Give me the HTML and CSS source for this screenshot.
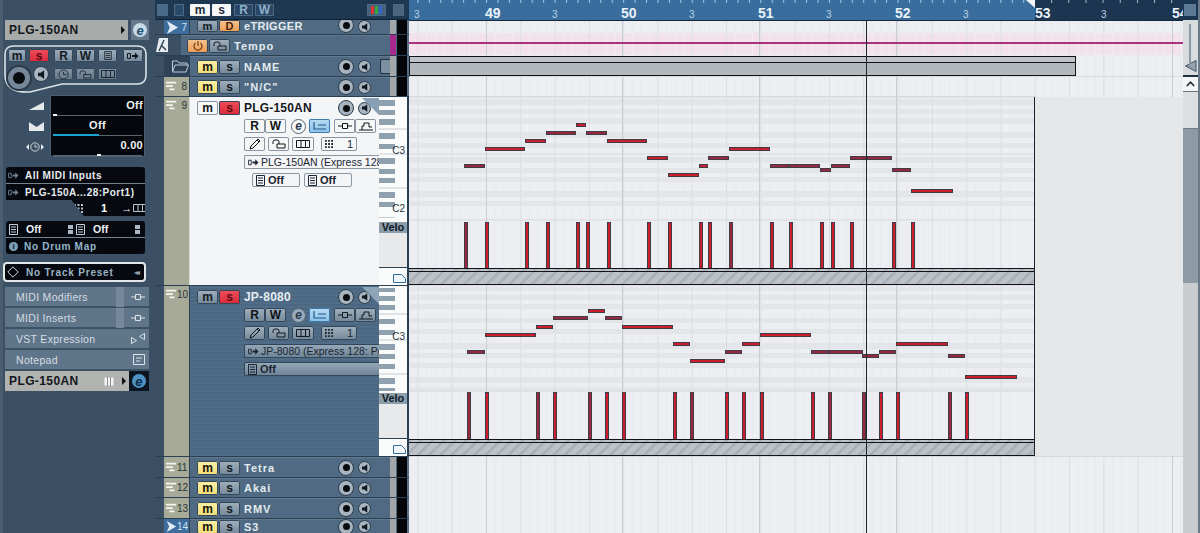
FILE: index.html
```html
<!DOCTYPE html>
<html lang="en">
<head>
<meta charset="utf-8">
<title>Project</title>
<link rel="stylesheet" href="styles.css">
</head>
<body>
<svg class="defs" width="0" height="0">
  <symbol id="i-lock" viewBox="0 0 14 10"><path d="M1 5V3q0-2 2-2h2q2 0 2 2v2M5 5h8v4H5z" fill="none" stroke="currentColor"/></symbol>
  <symbol id="i-cells" viewBox="0 0 14 8"><path d="M.5.5h13v7H.5zM5 .5v7M9.500 .5v7" fill="none" stroke="currentColor"/></symbol>
  <symbol id="i-clock" viewBox="0 0 12 12"><circle cx="6" cy="6" r="5" fill="none" stroke="currentColor"/><path d="M6 3v3h3" fill="none" stroke="currentColor"/></symbol>
  <symbol id="i-dots" viewBox="0 0 9 9"><path d="M0 0h2v2H0zM3.500 0h2v2h-2zM7 0h2v2H7zM0 3.500h2v2H0zM3.500 3.500h2v2h-2zM7 3.500h2v2H7zM0 7h2v2H0zM3.500 7h2v2h-2zM7 7h2v2H7z" fill="currentColor"/></symbol>
  <symbol id="i-out" viewBox="0 0 12 10"><path d="M.5 2.500h3v5h-3z" fill="none" stroke="currentColor"/><path d="M5 4h3V1.500L11.500 5 8 8.500V6H5z" fill="currentColor"/></symbol>
  <symbol id="i-list" viewBox="0 0 9 11"><path d="M.5.5h8v10h-8zM2 3h5M2 5.500h5M2 8h5" fill="none" stroke="currentColor"/></symbol>
  <symbol id="i-track" viewBox="0 0 13 11"><path d="M0 0h12v2H0zM0 4h8v2H0zM4 8h6v2H4z" fill="#f4f5ee"/></symbol>
  <symbol id="i-play" viewBox="0 0 14 14"><path d="M1 0l12 7-12 7 3-7z" fill="#dfeaf4"/></symbol>
  <symbol id="i-pencil" viewBox="0 0 12 12"><path d="M1 11l1-3 6-6 2 2-6 6zM8 2l1-1 2 2-1 1" fill="none" stroke="currentColor"/></symbol>
  <symbol id="i-mix" viewBox="0 0 14 8"><path d="M0 4h4M10 4h4M4.500 1.500h5v5h-5z" fill="none" stroke="currentColor"/></symbol>
  <symbol id="i-send" viewBox="0 0 14 10"><path d="M0 9h14M3 9V5h2V2h5v4h3" fill="none" stroke="currentColor"/></symbol>
  <symbol id="i-speaker" viewBox="0 0 8 10"><path d="M0 3h3l4-3v10L3 7H0z" fill="currentColor"/></symbol>
</svg>

<div class="app">
  <aside class="inspector">
    <div class="insp-head">
      <div class="pill"><span>PLG-150AN</span><i class="caret"></i></div>
      <div class="ebtn">e</div>
    </div>

    <div class="ctrl">
      <svg class="ctrl-line" width="144" height="49" viewBox="0 0 144 49"><path d="M10 1H133Q142 1 142 9V30Q142 39 133 39H58L26 47Q1 48 1 30V9Q1 1 10 1Z" fill="none" stroke="#dbe3e8" stroke-width="1.600"/></svg>
      <div class="ctrl-row">
        <b class="btn w18">m</b><b class="btn w20 red">s</b>
        <b class="btn w19 ml5">R</b><b class="btn w19">W</b>
        <b class="btn w19"><svg width="10" height="9"><use href="#i-list"/></svg></b>
        <b class="btn w20 ml6"><svg width="12" height="10"><use href="#i-out"/></svg></b>
      </div>
      <div class="ctrl-row2">
        <div class="rec big"></div>
        <div class="mon mid"><svg width="7" height="9"><use href="#i-speaker"/></svg></div>
        <b class="btn w19 flat"><svg width="11" height="11"><use href="#i-clock"/></svg></b>
        <b class="btn w19 flat"><svg width="13" height="9"><use href="#i-lock"/></svg></b>
        <b class="btn w19 flat"><svg width="14" height="8"><use href="#i-cells"/></svg></b>
      </div>
    </div>

    <div class="meters">
      <div class="meter-icons">
        <svg width="15" height="9"><path d="M0 9L15 1v8z" fill="#e4e9ec"/></svg>
        <svg width="15" height="9"><path d="M0 0l7.500 5L15 0v9H0z" fill="#e4e9ec"/></svg>
        <span class="pan-ico"><i class="tl"></i><svg width="10" height="10"><use href="#i-clock"/></svg><i class="tr"></i></span>
      </div>
      <div class="meter-box">
        <div class="meter right">Off<i class="track"><i class="thumb t-left"></i></i></div>
        <div class="meter center">Off<i class="track"><i class="fill"></i></i></div>
        <div class="meter right">0.00<i class="track"><i class="thumb t-mid"></i></i></div>
      </div>
    </div>

    <div class="io">
      <div class="io-row line"><svg width="11" height="9"><use href="#i-out"/></svg><span>All MIDI Inputs</span></div>
      <div class="io-row"><svg width="11" height="9"><use href="#i-out"/></svg><span>PLG-150A...28:Port1)</span></div>
    </div>
    <div class="io-tail">
      <svg width="9" height="9"><use href="#i-dots"/></svg><span>1</span><em>&#8594;</em><svg width="14" height="8"><use href="#i-cells"/></svg>
    </div>

    <div class="drum">
      <div class="drum-row">
        <svg width="9" height="11"><use href="#i-list"/></svg><span class="off">Off</span><i class="updn"></i>
        <svg width="9" height="11"><use href="#i-list"/></svg><span class="off">Off</span><i class="updn"></i>
      </div>
      <div class="drum-map"><i class="info">i</i><span>No Drum Map</span></div>
    </div>

    <div class="preset">
      <svg width="12" height="12" viewBox="0 0 12 12"><path d="M6 .8L11.200 6 6 11.200.8 6z" fill="none" stroke="#cfd8df"/></svg>
      <span>No Track Preset</span><em>&#9666;&#9666;</em>
    </div>

    <div class="sect"><span>MIDI Modifiers</span><i class="strip"></i><svg width="14" height="8"><use href="#i-mix"/></svg></div>
    <div class="sect"><span>MIDI Inserts</span><i class="strip"></i><svg width="14" height="8"><use href="#i-mix"/></svg></div>
    <div class="sect"><span>VST Expression</span><svg class="vst" width="14" height="11" viewBox="0 0 14 11"><path d="M.5 4.500l5 3-5 3zM13.500.5v6l-5-3z" fill="none" stroke="#dbe3e8"/></svg></div>
    <div class="sect"><span>Notepad</span><svg class="vst" width="12" height="11" viewBox="0 0 12 11"><path d="M.5.5h11v10H.5zM3 4h6M3 7h4" fill="none" stroke="#dbe3e8"/></svg></div>
    <div class="sect last">
      <div class="pill2"><span>PLG-150AN</span><svg width="10" height="9"><path d="M.5.5h9v8h-9z" fill="#f5f5f5"/><path d="M3.500 0v9M6.500 0v9" stroke="#888"/></svg><i class="caret"></i></div>
      <div class="ebtn dark">e</div>
    </div>
  </aside>

  <section class="tracks">
    <div class="toolbar">
      <b class="tb drop"></b>
      <b class="tb sq"></b>
      <b class="tb tog on w20">m</b><b class="tb tog on w18">s</b><b class="tb tog w19">R</b><b class="tb tog w19">W</b>
      <span class="tb-space"></span>
      <b class="tb rgb"><i></i><i></i><i></i></b>
      <b class="tb gray"></b>
    </div>

    <div class="row r14 end">
      <div class="gut"></div><div class="num blue"><svg width="13" height="13"><use href="#i-play"/></svg><span>7</span></div>
      <div class="body"><b class="btn w21">m</b><b class="btn w21 orange">D</b><span class="name">eTRIGGER</span><div class="rec"></div><div class="mon"><svg width="6" height="8"><use href="#i-speaker"/></svg></div><i class="strip-g"></i><i class="strip-k"></i></div>
    </div>
    <div class="row r21">
      <div class="gut wide"><svg width="12" height="14" viewBox="0 0 12 14"><path d="M3 0h9v14H0z" fill="#e6ecf0"/><path d="M3 13L8 2M5 7l5 5" stroke="#33475b" stroke-width="1.500"/></svg></div>
      <div class="body tempo"><b class="btn w21 orange"><svg width="10" height="10" viewBox="0 0 10 10"><path d="M5 0v5M2.500 2a4 4 0 1 0 5 0" fill="none" stroke="#6b3a10" stroke-width="1.200"/></svg></b><b class="btn w21"><svg width="14" height="10"><use href="#i-lock"/></svg></b><span class="name">Tempo</span><i class="strip-m"></i><i class="strip-k"></i></div>
    </div>
    <div class="row r21">
      <div class="gut"></div><div class="num navy"><svg class="folder" width="17" height="13" viewBox="0 0 17 13"><path d="M.5 11V1h5l1.500 2h8v2M.5 12L3 5h13.500l-2.500 7z" fill="none" stroke="#bccad6"/></svg></div>
      <div class="body"><b class="btn w21 yel">m</b><b class="btn w21">s</b><span class="name">NAME</span><div class="rec"></div><div class="mon"><svg width="6" height="8"><use href="#i-speaker"/></svg></div><i class="stub"></i><i class="strip-g tight"></i><i class="strip-k"></i></div>
    </div>
    <div class="row r20">
      <div class="gut"></div><div class="num"><svg width="11" height="11"><use href="#i-track"/></svg><span>8</span></div>
      <div class="body"><b class="btn w21 yel">m</b><b class="btn w21">s</b><span class="name">"N/C"</span><div class="rec"></div><div class="mon"><svg width="6" height="8"><use href="#i-speaker"/></svg></div><i class="strip-g"></i><i class="strip-k"></i></div>
    </div>

    <div class="row expanded r189 light">
      <div class="gut"></div><div class="num top"><svg width="11" height="11"><use href="#i-track"/></svg><span>9</span></div>
      <div class="detail">
        <i class="corner"></i>
        <div class="d-head"><b class="btn w21 white">m</b><b class="btn w21 red">s</b><span class="name big">PLG-150AN</span><div class="rec"></div><div class="mon"><svg width="6" height="8"><use href="#i-speaker"/></svg></div></div>
        <div class="d-row">
          <b class="btn w21 white">R</b><b class="btn w21 white">W</b><b class="ebox">e</b><b class="btn w21 blue-on"><svg width="14" height="8" viewBox="0 0 14 8"><path d="M1 0v7h12M5 3h8" fill="none" stroke="#1d5a90" stroke-width="1.200"/></svg></b><b class="btn w21 white ml4"><svg width="14" height="8"><use href="#i-mix"/></svg></b><b class="btn w21 white"><svg width="14" height="10"><use href="#i-send"/></svg></b>
        </div>
        <div class="d-row">
          <b class="btn w21 white"><svg width="12" height="12"><use href="#i-pencil"/></svg></b><b class="btn w21 white ml3"><svg width="14" height="10"><use href="#i-lock"/></svg></b><b class="btn w22 white ml3"><svg width="14" height="8"><use href="#i-cells"/></svg></b><b class="btn w36 white ml7 chan"><svg width="8" height="8"><use href="#i-dots"/></svg><span>1</span></b>
        </div>
        <div class="d-row"><b class="field"><svg width="11" height="9"><use href="#i-out"/></svg><span>PLG-150AN (Express 128:</span></b></div>
        <div class="d-row"><b class="field off w48"><svg width="9" height="11"><use href="#i-list"/></svg><span>Off</span></b><b class="field off w48 ml4"><svg width="9" height="11"><use href="#i-list"/></svg><span>Off</span></b></div>
      </div>
      <svg class="piano" width="30" height="189" viewBox="379 96 30 189">
        <rect class="p-white" x="379" y="96" width="28" height="125"/>
        <path class="p-key" d="M379 99h16v6h-16zM379 109h16v5h-16zM379 118h16v6h-16zM379 132h16v6h-16zM379 143h16v5h-16zM379 157h16v6h-16zM379 168h16v5h-16zM379 177h16v5h-16zM379 191h16v6h-16zM379 201h16v5h-16z"/>
        <path class="p-line" d="M379 128h28M379 153h28M379 187h28M379 216.500h16"/>
        <text class="p-c" x="405" y="153" text-anchor="end">C3</text>
        <text class="p-c" x="405" y="211" text-anchor="end">C2</text>
        <rect class="p-velo" x="379" y="221" width="28" height="11"/>
        <text class="p-vt" x="393" y="230" text-anchor="middle">Velo</text>
        <rect class="p-pad" x="379" y="232" width="28" height="34"/>
        <rect class="p-white" x="379" y="267" width="28" height="18"/>
        <path class="p-doc" d="M393.500 273.500h8l4 4v4h-12z"/>
      </svg>
    </div>

    <div class="row expanded r171">
      <div class="gut"></div><div class="num top"><svg width="11" height="11"><use href="#i-track"/></svg><span>10</span></div>
      <div class="detail">
        <i class="corner pale"></i>
        <div class="d-head"><b class="btn w21">m</b><b class="btn w21 red">s</b><span class="name big pale-t">JP-8080</span><div class="rec"></div><div class="mon"><svg width="6" height="8"><use href="#i-speaker"/></svg></div></div>
        <div class="d-row plus1">
          <b class="btn w21 dark-t">R</b><b class="btn w21 dark-t">W</b><b class="ebox blue">e</b><b class="btn w21 blue-on"><svg width="14" height="8" viewBox="0 0 14 8"><path d="M1 0v7h12M5 3h8" fill="none" stroke="#1d5a90" stroke-width="1.200"/></svg></b><b class="btn w21 ml4"><svg width="14" height="8"><use href="#i-mix"/></svg></b><b class="btn w21"><svg width="14" height="10"><use href="#i-send"/></svg></b>
        </div>
        <div class="d-row">
          <b class="btn w21"><svg width="12" height="12"><use href="#i-pencil"/></svg></b><b class="btn w21 ml3"><svg width="14" height="10"><use href="#i-lock"/></svg></b><b class="btn w22 ml3"><svg width="14" height="8"><use href="#i-cells"/></svg></b><b class="btn w36 ml7 chan"><svg width="8" height="8"><use href="#i-dots"/></svg><span>1</span></b>
        </div>
        <div class="d-row"><b class="field navyf"><svg width="11" height="9"><use href="#i-out"/></svg><span>JP-8080 (Express 128: Po</span></b></div>
        <div class="d-row"><b class="field navyf grow"><svg width="9" height="11"><use href="#i-list"/></svg><span>Off</span></b></div>
      </div>
      <svg class="piano" width="30" height="171" viewBox="379 285 30 171">
        <rect class="p-white" x="379" y="285" width="28" height="107"/>
        <path class="p-key" d="M379 287h16v4h-16zM379 295h16v5h-16zM379 304h16v5h-16zM379 318h16v5h-16zM379 329h16v5h-16zM379 343h16v6h-16zM379 353h16v5h-16zM379 363h16v5h-16zM379 377h16v6h-16zM379 387h16v3h-16z"/>
        <path class="p-line" d="M379 313h28M379 339h28M379 373h28"/>
        <text class="p-c" x="405" y="339" text-anchor="end">C3</text>
        <rect class="p-velo" x="379" y="392" width="28" height="11"/>
        <text class="p-vt" x="393" y="401" text-anchor="middle">Velo</text>
        <rect class="p-pad" x="379" y="403" width="28" height="34"/>
        <rect class="p-white" x="379" y="438" width="28" height="18"/>
        <path class="p-doc" d="M393.500 444.500h8l4 4v4h-12z"/>
      </svg>
    </div>

    <div class="row r21">
      <div class="gut"></div><div class="num"><svg width="11" height="11"><use href="#i-track"/></svg><span>11</span></div>
      <div class="body"><b class="btn w21 yel">m</b><b class="btn w21">s</b><span class="name">Tetra</span><div class="rec"></div><div class="mon"><svg width="6" height="8"><use href="#i-speaker"/></svg></div><i class="strip-g"></i><i class="strip-k"></i></div>
    </div>
    <div class="row r20">
      <div class="gut"></div><div class="num"><svg width="11" height="11"><use href="#i-track"/></svg><span>12</span></div>
      <div class="body"><b class="btn w21 yel">m</b><b class="btn w21">s</b><span class="name">Akai</span><div class="rec"></div><div class="mon"><svg width="6" height="8"><use href="#i-speaker"/></svg></div><i class="strip-g"></i><i class="strip-k"></i></div>
    </div>
    <div class="row r21">
      <div class="gut"></div><div class="num"><svg width="11" height="11"><use href="#i-track"/></svg><span>13</span></div>
      <div class="body"><b class="btn w21 yel">m</b><b class="btn w21">s</b><span class="name">RMV</span><div class="rec"></div><div class="mon"><svg width="6" height="8"><use href="#i-speaker"/></svg></div><i class="strip-g"></i><i class="strip-k"></i></div>
    </div>
    <div class="row r15">
      <div class="gut"></div><div class="num blue"><svg width="11" height="13"><use href="#i-play"/></svg><span>14</span></div>
      <div class="body"><b class="btn w21 yel">m</b><b class="btn w21">s</b><span class="name">S3</span><div class="rec"></div><div class="mon"><svg width="6" height="8"><use href="#i-speaker"/></svg></div><i class="strip-g"></i><i class="strip-k"></i></div>
    </div>
  </section>

  <svg class="arrange" width="774" height="533" viewBox="409 0 774 533">
    <defs>
      <pattern id="beat" patternUnits="userSpaceOnUse" x="486" y="0" width="34.300" height="10"><rect x="0" width="1" height="10" fill="#dadde1"/></pattern>
      <pattern id="sub" patternUnits="userSpaceOnUse" x="486" y="0" width="8.575" height="10"><rect x="0" width="1" height="10" fill="#e7e9ed"/></pattern>
      <pattern id="tick" patternUnits="userSpaceOnUse" x="486" y="0" width="11.430" height="4"><rect x="0" width="1" height="3" fill="#a9c6de"/></pattern>
      <pattern id="tick2" patternUnits="userSpaceOnUse" x="1034" y="0" width="17.150" height="4"><rect x="0" width="1" height="3" fill="#a9bccd"/></pattern>
      <pattern id="pinkbar" patternUnits="userSpaceOnUse" x="410" y="0" width="8.575" height="10"><rect x="0" width="7.500" height="10" fill="#f1e2ec"/><rect x="7.500" width="1.075" height="10" fill="#f5ebf1"/></pattern>
      <pattern id="hatch" patternUnits="userSpaceOnUse" width="8" height="8" patternTransform="rotate(45)"><rect width="8" height="8" fill="#bcc2c8"/><rect width="2.500" height="8" fill="#a7aeb5"/></pattern>
    </defs>

    <rect x="409" y="0" width="774" height="533" fill="#eceef1"/>
    <rect x="409" y="21" width="774" height="512" fill="url(#sub)"/>

    <!-- lane backgrounds -->
    <rect x="1035" y="97" width="148" height="436" fill="#e5e7e9"/>
    <rect x="1035" y="456" width="148" height="77" fill="#eceef1"/>
    <rect x="1035" y="456" width="148" height="77" fill="url(#sub)"/>
    <path class="stripes" d="M409 99h626v6H409zM409 109h626v5H409zM409 118h626v6H409zM409 132h626v6H409zM409 143h626v5H409zM409 157h626v6H409zM409 168h626v5H409zM409 177h626v5H409zM409 191h626v6H409zM409 201h626v5H409zM409 287h626v4H409zM409 295h626v5H409zM409 304h626v5H409zM409 318h626v5H409zM409 329h626v5H409zM409 343h626v6H409zM409 353h626v5H409zM409 363h626v5H409zM409 377h626v6H409zM409 387h626v4H409z"/>
    <path class="hsep" d="M409 97h626M409 154h626M409 220h626M409 391h626M409 76.500h774M409 96.500h626M409 285.500h774M409 456.500h774"/>

    <!-- tempo track -->
    <rect x="409" y="33" width="774" height="22" fill="#f0e2eb"/>
    <rect x="409" y="33" width="774" height="22" fill="url(#pinkbar)"/>

    <!-- grid -->
    <rect x="409" y="21" width="774" height="512" fill="url(#beat)" fill-opacity=".9"/>
    <rect x="1035" y="97" width="148" height="359" fill="#e5e7e9"/>
    <path class="barline" d="M486.500 21v512M622.500 21v512M759.500 21v512M896.500 21v512M1172.500 21v76M1172.500 456v77"/>

    <rect x="409" y="42" width="774" height="2" fill="#a8307f"/>

    <!-- folder part -->
    <rect x="409.500" y="56.500" width="666" height="19" fill="#b3b8bd" stroke="#101418"/>
    <rect x="410" y="57" width="665" height="5" fill="#bfc3c7"/>
    <path d="M409 62.500h666" stroke="#101418"/>

    <!-- note lane 1 -->
    <g class="notes">
      <rect class="n d" x="464.500" y="164.500" width="20" height="3"/>
      <rect class="n" x="485.500" y="147.500" width="39" height="3"/>
      <rect class="n" x="525.500" y="139.500" width="20" height="3"/>
      <rect class="n d" x="546.500" y="131.500" width="29" height="3"/>
      <rect class="n" x="576.500" y="123.500" width="9" height="3"/>
      <rect class="n d" x="586.500" y="131.500" width="20" height="3"/>
      <rect class="n" x="607.500" y="139.500" width="39" height="3"/>
      <rect class="n" x="647.500" y="156.500" width="20" height="3"/>
      <rect class="n" x="668.500" y="173.500" width="30" height="3"/>
      <rect class="n" x="699.500" y="164.500" width="8" height="3"/>
      <rect class="n d" x="708.500" y="156.500" width="20" height="3"/>
      <rect class="n" x="729.500" y="147.500" width="40" height="3"/>
      <rect class="n d" x="770.500" y="164.500" width="18" height="3"/>
      <rect class="n d" x="789.500" y="164.500" width="30" height="3"/>
      <rect class="n d" x="820.500" y="168.500" width="10" height="3"/>
      <rect class="n d" x="831.500" y="164.500" width="18" height="3"/>
      <rect class="n d" x="850.500" y="156.500" width="16" height="3"/>
      <rect class="n d" x="867.500" y="156.500" width="24" height="3"/>
      <rect class="n d" x="892.500" y="168.500" width="18" height="3"/>
      <rect class="n" x="911.500" y="189.500" width="41" height="3"/>
    </g>
    <g class="vels">
      <rect class="v d" x="464.500" y="222.500" width="3" height="46"/>
      <rect class="v" x="485.500" y="222.500" width="3" height="46"/>
      <rect class="v" x="525.500" y="222.500" width="3" height="46"/>
      <rect class="v" x="546.500" y="222.500" width="3" height="46"/>
      <rect class="v" x="576.500" y="222.500" width="3" height="46"/>
      <rect class="v" x="586.500" y="222.500" width="3" height="46"/>
      <rect class="v" x="607.500" y="222.500" width="3" height="46"/>
      <rect class="v" x="647.500" y="222.500" width="3" height="46"/>
      <rect class="v" x="668.500" y="222.500" width="3" height="46"/>
      <rect class="v" x="699.500" y="222.500" width="3" height="46"/>
      <rect class="v" x="708.500" y="222.500" width="3" height="46"/>
      <rect class="v d" x="729.500" y="222.500" width="3" height="46"/>
      <rect class="v" x="770.500" y="222.500" width="3" height="46"/>
      <rect class="v" x="789.500" y="222.500" width="3" height="46"/>
      <rect class="v" x="820.500" y="222.500" width="3" height="46"/>
      <rect class="v" x="831.500" y="222.500" width="3" height="46"/>
      <rect class="v" x="850.500" y="222.500" width="3" height="46"/>
      <rect class="v" x="892.500" y="222.500" width="3" height="46"/>
      <rect class="v" x="911.500" y="222.500" width="3" height="46"/>
    </g>
    <rect x="409" y="268" width="626" height="17" fill="url(#hatch)"/>
    <path class="hline" d="M409 268.500h626M409 271.500h626M409 284.500h626"/>

    <!-- note lane 2 -->
    <g class="notes">
      <rect class="n d" x="467.500" y="350.500" width="17" height="3"/>
      <rect class="n" x="485.500" y="333.500" width="50" height="3"/>
      <rect class="n" x="536.500" y="325.500" width="16" height="3"/>
      <rect class="n d" x="553.500" y="316.500" width="34" height="3"/>
      <rect class="n" x="588.500" y="309.500" width="16" height="3"/>
      <rect class="n d" x="605.500" y="316.500" width="16" height="3"/>
      <rect class="n" x="622.500" y="325.500" width="50" height="3"/>
      <rect class="n" x="673.500" y="342.500" width="16" height="3"/>
      <rect class="n" x="690.500" y="359.500" width="34" height="3"/>
      <rect class="n d" x="725.500" y="350.500" width="16" height="3"/>
      <rect class="n" x="742.500" y="342.500" width="17" height="3"/>
      <rect class="n" x="760.500" y="333.500" width="50" height="3"/>
      <rect class="n d" x="811.500" y="350.500" width="16" height="3"/>
      <rect class="n d" x="828.500" y="350.500" width="34" height="3"/>
      <rect class="n d" x="862.500" y="354.500" width="16" height="3"/>
      <rect class="n d" x="879.500" y="350.500" width="16" height="3"/>
      <rect class="n" x="896.500" y="342.500" width="51" height="3"/>
      <rect class="n d" x="948.500" y="354.500" width="16" height="3"/>
      <rect class="n" x="965.500" y="375.500" width="51" height="3"/>
    </g>
    <g class="vels">
      <rect class="v d" x="467.500" y="392.500" width="3" height="47"/>
      <rect class="v" x="485.500" y="392.500" width="3" height="47"/>
      <rect class="v d" x="536.500" y="392.500" width="3" height="47"/>
      <rect class="v" x="553.500" y="392.500" width="3" height="47"/>
      <rect class="v d" x="588.500" y="392.500" width="3" height="47"/>
      <rect class="v" x="605.500" y="392.500" width="3" height="47"/>
      <rect class="v" x="622.500" y="392.500" width="3" height="47"/>
      <rect class="v" x="673.500" y="392.500" width="3" height="47"/>
      <rect class="v d" x="690.500" y="392.500" width="3" height="47"/>
      <rect class="v" x="725.500" y="392.500" width="3" height="47"/>
      <rect class="v" x="742.500" y="392.500" width="3" height="47"/>
      <rect class="v" x="760.500" y="392.500" width="3" height="47"/>
      <rect class="v" x="811.500" y="392.500" width="3" height="47"/>
      <rect class="v d" x="828.500" y="392.500" width="3" height="47"/>
      <rect class="v d" x="862.500" y="392.500" width="3" height="47"/>
      <rect class="v" x="879.500" y="392.500" width="3" height="47"/>
      <rect class="v" x="896.500" y="392.500" width="3" height="47"/>
      <rect class="v d" x="948.500" y="392.500" width="3" height="47"/>
      <rect class="v" x="965.500" y="392.500" width="3" height="47"/>
    </g>
    <rect x="409" y="439" width="626" height="17" fill="url(#hatch)"/>
    <path class="hline" d="M409 439.500h626M409 442.500h626M409 455.500h626"/>

    <path class="endline" d="M1034.500 97v359"/>
    <path class="playhead" d="M866.500 21v512"/>

    <!-- ruler -->
    <rect x="409" y="0" width="626" height="20" fill="#386d9d"/>
    <rect x="1035" y="0" width="148" height="20" fill="#1c3551"/>
    <rect x="409" y="0" width="626" height="4" fill="url(#tick)"/>
    <rect x="1035" y="0" width="148" height="4" fill="url(#tick2)"/>
    <path d="M1026 0h9v8z" fill="#f2f5f8"/>
    <rect x="409" y="20" width="774" height="1" fill="#16293c"/>
    <g class="bar-l">
      <text x="485" y="18">49</text><text x="621" y="18">50</text><text x="758" y="18">51</text><text x="895" y="18">52</text><text x="1035" y="18">53</text><text x="1172" y="18">54</text>
    </g>
    <g class="beat-l">
      <text x="414" y="18">3</text><text x="552" y="18">3</text><text x="689" y="18">3</text><text x="826" y="18">3</text><text x="963" y="18">3</text><text x="1101" y="18">3</text>
    </g>
  </svg>

  <aside class="scroll">
    <div class="sc-top"><b></b></div>
    <div class="sc-zoom"><i></i><svg width="12" height="12" viewBox="0 0 12 12"><path d="M11 .5v11L.5 6z" fill="#95a3ae" stroke="#3f5162"/></svg></div>
    <div class="sc-up"><svg width="9" height="6" viewBox="0 0 9 6"><path d="M.8 5L4.500 1.200 8.200 5" fill="none" stroke="#1b2a38" stroke-width="1.600"/></svg></div>
    <div class="sc-track"></div>
    <div class="sc-thumb"></div>
    <div class="sc-rest"></div>
  </aside>
</div>
</body>
</html>
```

FILE: styles.css
```css
* { box-sizing: border-box; }
html, body { margin: 0; padding: 0; background: #3b5064; }
body { font-family: "Liberation Sans", Arial, sans-serif; overflow: hidden; }
.defs { position: absolute; }
.app { display: flex; width: 1200px; height: 533px; overflow: hidden; }
i, em { font-style: normal; }
svg { flex: none; }

/* inspector */
.inspector { width: 155px; flex: none; height: 533px; background: #3b5064; border-left: 3px solid #4a5e70; }
.insp-head { display: flex; margin: 20px 0 0 2px; width: 144px; gap: 3px; }
.pill { width: 123px; height: 20px; background: #a7abaa; display: flex; align-items: center; justify-content: space-between; padding: 0 3px 0 4px; font-size: 12px; font-weight: 700; color: #14181c; letter-spacing: .4px; }
.caret { display: inline-block; width: 0; height: 0; border-left: 4px solid #111; border-top: 4px solid transparent; border-bottom: 4px solid transparent; }
.ebtn { width: 18px; height: 20px; display: flex; align-items: center; justify-content: center; background: #66798a; color: #24506f; font: italic 700 13px "Liberation Sans", sans-serif; position: relative; z-index: 0; }
.ebtn::before { content: ""; position: absolute; left: 2px; top: 3px; width: 14px; height: 14px; border-radius: 50%; background: #c6dbe9; z-index: -1; }
.ebtn.dark { background: #0b1622; height: 20px; width: 20px; color: #0b2c44; }
.ebtn.dark::before { left: 3px; background: #4f93c4; }

.ctrl { position: relative; margin: 5px 0 0 1px; width: 144px; height: 49px; padding: 4px 0 0 4px; }
.ctrl-line { position: absolute; left: 0; top: 0; }
.ctrl-row { display: flex; gap: 3px; position: relative; }
.ctrl-row .btn { height: 13px; }
.ctrl-row2 { display: flex; align-items: flex-start; position: relative; margin-top: 3px; gap: 3px; }
.rec.big { width: 26px; height: 26px; border-width: 2px; margin: 0 -1px 0 -2px; background: #76879a; }
.rec.big::after { width: 12px; height: 12px; left: 5px; top: 5px; }
.mon.mid { width: 16px; height: 16px; margin: 1px 2px 0 -1px; }
.ctrl-row2 .btn { height: 12px; margin-top: 3px; }
.flat { opacity: .72; }

.meters { display: flex; margin: 1px 0 0 0; }
.meter-icons { width: 47px; display: flex; flex-direction: column; align-items: flex-end; padding: 6px 6px 0 0; gap: 12px; color: #e4e9ec; }
.pan-ico { display: flex; align-items: center; gap: 1px; color: #e4e9ec; margin-top: -1px; }
.pan-ico .tl { border-right: 3px solid #e4e9ec; border-top: 3px solid transparent; border-bottom: 3px solid transparent; }
.pan-ico .tr { border-left: 3px solid #e4e9ec; border-top: 3px solid transparent; border-bottom: 3px solid transparent; }
.meter-box { width: 95px; height: 62px; background: #04070b; border: 1px solid #4c6072; border-radius: 2px; padding: 2px 1px 0; }
.meter { position: relative; height: 20px; color: #f0f3f5; font-size: 11px; font-weight: 700; line-height: 15px; letter-spacing: .3px; }
.meter.right { text-align: right; }
.meter.center { text-align: center; }
.meter .track { position: absolute; left: 1px; right: 1px; bottom: 2px; height: 1px; background: #5b6670; }
.thumb { position: absolute; top: -1px; height: 2px; width: 4px; background: #f0f3f5; }
.t-left { left: 0; }
.t-mid { left: 44px; }
.meter .fill { position: absolute; left: 0; top: -1px; width: 46px; height: 2px; background: #1aa4d4; }

.io { margin: 10px 0 0 3px; width: 139px; height: 33px; background: #060a10; border-radius: 3px 3px 0 0; }
.io-row { display: flex; align-items: center; height: 16px; padding-left: 2px; gap: 6px; color: #6a8193; font-size: 10px; font-weight: 700; }
.io-row span { color: #e6ebef; letter-spacing: .5px; white-space: nowrap; }
.io-row.line { border-bottom: 1px solid #75838f; height: 17px; }
.io-tail { margin-left: 3px; width: 139px; height: 16px; background: #060a10; clip-path: polygon(47% 0, 100% 0, 100% 100%, 56% 100%); display: flex; align-items: center; padding-left: 68px; color: #b9c6d0; font-size: 11px; font-weight: 700; }
.io-tail span { color: #fff; margin-left: 18px; }
.io-tail em { color: #fff; margin-left: 14px; margin-right: 1px; }
.drum { margin: 5px 0 0 3px; width: 139px; height: 33px; background: #060a10; border-radius: 3px; }
.drum-row { display: flex; align-items: center; height: 17px; padding-left: 3px; border-bottom: 1px solid #75838f; color: #c5d0d8; }
.off { font-size: 10.500px; font-weight: 700; color: #eef2f4; margin-left: 8px; width: 42px; }
.updn { width: 5px; height: 9px; margin: 0 3px 0 0; background: linear-gradient(#aab6c0 0 40%, transparent 40% 60%, #aab6c0 60%); }
.drum-map { display: flex; align-items: center; height: 16px; padding-left: 3px; gap: 6px; }
.info { width: 9px; height: 9px; border-radius: 50%; background: #7fa0b8; color: #08121b; font-size: 8px; font-weight: 700; text-align: center; line-height: 9px; }
.drum-map span { color: #95b5cc; font-size: 10px; font-weight: 700; letter-spacing: .7px; }

.preset { margin: 8px 0 0 0; width: 143px; height: 20px; background: #060a10; border: 2px solid #e2e7ea; border-radius: 4px; display: flex; align-items: center; padding-left: 2px; gap: 7px; }
.preset span { color: #9db3c4; font-size: 10px; font-weight: 700; letter-spacing: .8px; flex: 1; }
.preset em { color: #8fa1af; font-size: 8px; letter-spacing: -2px; margin-right: 6px; }

.sect { margin: 0 0 1px 2px; width: 144px; height: 20px; background: #5f7589; display: flex; align-items: center; padding-left: 11px; color: #d5dde3; font-size: 10.500px; letter-spacing: .3px; position: relative; border-bottom: 1px solid #3e5266; }
.inspector .preset + .sect { margin-top: 5px; }
.sect span { flex: 1; }
.sect svg { margin-right: 4px; color: #e0e6ea; }
.sect .strip { width: 8px; height: 20px; background: #75899b; margin-right: 7px; }
.sect .vst { margin-right: 4px; }
.sect.last { padding: 0; background: #b1b3b1; height: 20px; border: 0; }
.pill2 { flex: 1; height: 20px; display: flex; align-items: center; padding: 0 3px 0 4px; font-size: 12px; font-weight: 700; color: #14181c; letter-spacing: .4px; }
.pill2 span { flex: 1; }
.pill2 svg { margin: 0 8px 0 0; }

/* track list */
.tracks { width: 254px; flex: none; display: flex; flex-direction: column; height: 533px; overflow: hidden; background: #3b5064; }
.toolbar { height: 20px; flex: none; background: #1e3852; display: flex; align-items: center; padding-left: 2px; border-bottom: 1px solid #0f2031; }
.tb { height: 12px; display: flex; align-items: center; justify-content: center; font-size: 12px; font-weight: 700; color: #8fb0cc; border-radius: 1px; margin-right: 2px; box-shadow: inset 0 0 0 1px #4b6b88; }
.drop { width: 11px; background: #4a6b88; margin-right: 6px; }
.sq { width: 10px; background: #2c4b69; margin-right: 6px; }
.tog.w20 { width: 20px; }
.tog.w18 { width: 19px; margin-right: 3px; }
.tog.w19 { width: 19px; background: #2a4663; }
.tog.on { background: #f4f6f8; color: #1c2c3c; box-shadow: none; }
.tb-space { flex: 1; }
.rgb { width: 19px; background: #45617b; gap: 1px; margin-right: 7px; }
.rgb i { width: 3px; height: 8px; background: #d33; }
.rgb i:nth-child(2) { background: #3a4; }
.rgb i:nth-child(3) { background: #36c; }
.gray { width: 11px; background: #4b6479; margin-right: 5px; }

.row { display: flex; flex: none; overflow: hidden; border-top: 1px solid #2b3f53; }
.r14 { height: 14px; border-top: 0; }
.r15 { height: 15px; }
.r20 { height: 20px; }
.r21 { height: 21px; }
.r171 { height: 171px; }
.r189 { height: 189px; }
.gut { width: 9px; flex: none; background: #3b5064; }
.gut.wide { width: 26px; padding-left: 1px; display: flex; align-items: center; }
.num { width: 26px; flex: none; background: #a7aa96; display: flex; align-items: center; padding: 0 2px 0 2px; color: #26333f; font-size: 10px; border-right: 1px solid #2e4154; }
.num.top { align-items: flex-start; padding-top: 3px; }
.num span { line-height: 11px; margin-left: auto; }
.num.blue { background: #3d6d9c; color: #cfe0ee; }
.num.navy { background: #2f4358; padding-left: 8px; }
.light .num { border-right: 1px solid #d9dcd8; }

.body { flex: 1; min-width: 0; display: flex; align-items: center; background: #4f6a82; padding-left: 7px; border-top: 1px solid #62798e; }
.end .body { align-items: flex-end; padding-bottom: 2px; border-top: 0; }
.end .body .btn { height: 12px; font-size: 11px; }
.end .body .rec, .end .body .mon { margin-bottom: -1px; }
.end .name { letter-spacing: .3px; }
.tempo { padding-left: 6px; }
.name { flex: 1; min-width: 0; margin-left: 4px; color: #e3eaef; font-size: 11px; font-weight: 700; letter-spacing: 1px; white-space: nowrap; }
.name.big { font-size: 12px; letter-spacing: .2px; color: #14181c; }
.name.pale-t { color: #e6edf2; }

.btn { height: 14px; display: flex; align-items: center; justify-content: center; flex: none; background: linear-gradient(#a2b0bd, #74889a); color: #111a22; font-size: 12px; font-weight: 700; line-height: 1; border-radius: 2px; box-shadow: inset 0 0 0 1px #33475a; }
.w18 { width: 18px; }
.w19 { width: 19px; }
.w20 { width: 20px; }
.w21 { width: 21px; }
.w22 { width: 22px; }
.w36 { width: 36px; }
.ml3 { margin-left: 3px; }
.ml4 { margin-left: 4px; }
.ml5 { margin-left: 2px; }
.ml6 { margin-left: 3px; }
.ml7 { margin-left: 7px; }
.body .w21 + .w21, .d-head .w21 + .w21 { margin-left: 1px; }
.red { background: linear-gradient(#f0505a, #d8283a); color: #5e0c14; }
.yel { background: linear-gradient(#fbf0a8, #f0dd76); color: #16130a; }
.orange { background: linear-gradient(#f8c48e, #ec9c56); color: #4a2408; }
.white { background: #f6f7f7; color: #101418; box-shadow: inset 0 0 0 1px #8895a1; }
.dark-t { color: #0c1218; }
.blue-on { background: linear-gradient(#b9dcf3, #8cc0e6); box-shadow: inset 0 0 0 1px #3a7cb0; }

.rec { width: 16px; height: 16px; flex: none; border-radius: 50%; background: #a7b4bf; border: 1px solid #2a3a48; position: relative; }
.rec::after { content: ""; position: absolute; left: 3.500px; top: 3.500px; width: 7px; height: 7px; border-radius: 50%; background: #0a0d10; }
.mon { width: 13px; height: 13px; flex: none; margin-left: 4px; border-radius: 50%; background: #a8b5c0; border: 1px solid #2a3a48; display: flex; align-items: center; justify-content: center; color: #101820; }
.strip-g { width: 6px; align-self: stretch; flex: none; background: #a3a6a7; margin-left: 19px; margin-top: -1px; }
.end .strip-g, .end .strip-k { margin-bottom: -2px; }
.strip-g.tight { margin-left: 0; }
.strip-m { width: 6px; align-self: stretch; flex: none; background: #a8288c; margin-top: -1px; }
.strip-k { width: 12px; align-self: stretch; flex: none; background: #04060a; margin-left: 1px; margin-top: -1px; border-right: 2px solid #59708a; }
.stub { width: 10px; height: 15px; margin-left: 9px; flex: none; background: #7d90a2; border: 1px solid #22323f; border-right: 0; border-radius: 2px 0 0 2px; }

.expanded { background: #4f6c87; }
.light { background: #f3f4f5; }
.detail { position: relative; width: 189px; flex: none; padding: 3px 0 0 7px; background: repeating-linear-gradient(#506c87 0 2px, #4b6781 2px 4px); overflow: hidden; }
.light .detail { background: #f4f5f6; }
.d-head { display: flex; align-items: center; height: 16px; padding-right: 8px; margin-bottom: 2px; }
.d-row { display: flex; align-items: center; height: 14px; margin: 4px 0 0 47px; white-space: nowrap; }
.d-row.plus1 { margin-top: 5px; }
.d-row:nth-child(3) { margin-top: 3px; }
.ebox { flex: none; width: 15px; height: 15px; margin: 0 3px 0 5px; border-radius: 50%; border: 1px solid #55626d; background: #fafbfb; color: #28384a; font: italic 700 12px "Liberation Sans", sans-serif; text-align: center; line-height: 12px; }
.ebox.blue { background: #96aabb; }
.chan { justify-content: space-between; padding: 0 4px; font-size: 11px; font-weight: 400; color: #1b2630; }
.field { display: flex; align-items: center; gap: 2px; flex: none; width: 135px; height: 14px; padding-left: 3px; background: #f4f5f6; color: #1a2530; border: 1px solid #8a97a3; border-right: 0; border-radius: 2px 0 0 2px; font-size: 10.500px; font-weight: 400; overflow: hidden; }
.field span { white-space: nowrap; }
.field.off { font-size: 11px; font-weight: 700; border-right: 1px solid #8a97a3; border-radius: 2px; gap: 3px; }
.w48 { width: 48px; }
.navyf { background: linear-gradient(#94a7b7, #6e8497); border-color: #33475a; }
.grow { font-size: 11px; font-weight: 700; gap: 3px; }
.corner { position: absolute; right: 0; top: 1px; width: 17px; height: 17px; background: #89a0b4; clip-path: polygon(0 0, 100% 0, 100% 100%); }
.corner.pale { background: #8ea4b7; }

.piano { flex: none; display: block; background: #2b3f53; }
.p-white { fill: #fafbfb; }
.p-key { fill: #8fa0ae; }
.p-line { stroke: #c7ccd1; stroke-width: 1; fill: none; }
.p-c { font: 10px "Liberation Sans", sans-serif; fill: #26323d; }
.p-velo { fill: #8c9dab; }
.p-vt { font: 700 11px "Liberation Sans", sans-serif; fill: #0f1a24; }
.p-pad { fill: #e7e9eb; }
.p-doc { fill: #f2f6f9; stroke: #2e6c9c; }

/* arrange */
.arrange { flex: none; display: block; width: 774px; height: 533px; }
.stripes { fill: #e3e5e9; }
.hsep { stroke: #d6d9dd; fill: none; }
.barline { stroke: #c9cdd2; fill: none; }
.n { fill: #cc1f2e; stroke: #3f3c48; stroke-width: 1; }
.n.d { fill: #962a3c; }
.v { fill: #cc1f2e; stroke: #3f3c48; stroke-width: 1; }
.v.d { fill: #962a3c; }
.hline { stroke: #101418; fill: none; }
.endline { stroke: #1d2330; fill: none; }
.playhead { stroke: #20262c; fill: none; }
.bar-l text { font: 700 14px "Liberation Sans", sans-serif; fill: #eaf2f8; text-anchor: start; }
.beat-l text { font: 10px "Liberation Sans", sans-serif; fill: #bcd4e6; }

/* right scrollers */
.scroll { width: 17px; flex: none; display: flex; flex-direction: column; background: #c9cdd0; border-right: 2px solid #6a7a88; }
.sc-top { height: 20px; background: #1c3551; padding: 4px 2px 0 1px; }
.sc-top b { display: block; height: 12px; background: #5c7a94; }
.sc-zoom { height: 57px; background: #d9dcdf; display: flex; justify-content: flex-end; align-items: flex-end; padding: 0 1px 3px 0; position: relative; border-bottom: 2px solid #22303c; }
.sc-zoom i { position: absolute; left: 6px; top: 4px; bottom: 8px; width: 2px; background: #8b98a3; }
.sc-up { height: 15px; background: #f4f5f6; display: flex; align-items: center; justify-content: center; border-bottom: 1px solid #66757f; }
.sc-track { height: 36px; background: #dcdfe1; }
.sc-thumb { height: 155px; background: #8e9aa4; border-top: 1px solid #6f7c87; }
.sc-rest { flex: 1; background: #c9cdd0; }
```
